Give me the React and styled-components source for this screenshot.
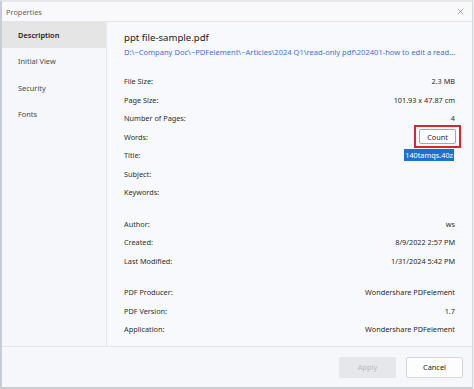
import React from 'react';
import styled, { createGlobalStyle } from 'styled-components';

const Global = createGlobalStyle`
  html, body { margin: 0; padding: 0; background: #eceef1; }
  body { font-family: "Noto Sans", "Open Sans", sans-serif; color: #333; }
`;

const groups = [
  [
    ['File Size:', '2.3 MB'],
    ['Page Size:', '101.93 x 47.87 cm'],
    ['Number of Pages:', '4'],
    ['Words:', 'count'],
    ['Title:', 'title'],
    ['Subject:', ''],
    ['Keywords:', ''],
  ],
  [
    ['Author:', 'ws'],
    ['Created:', '8/9/2022 2:57 PM'],
    ['Last Modified:', '1/31/2024 5:42 PM'],
  ],
  [
    ['PDF Producer:', 'Wondershare PDFelement'],
    ['PDF Version:', '1.7'],
    ['Application:', 'Wondershare PDFelement'],
  ],
];

const tabs = ['Description', 'Initial View', 'Security', 'Fonts'];

const renderValue = (v) => {
  if (v === 'count')
    return (
      <Highlight>
        <CountButton>Count</CountButton>
      </Highlight>
    );
  if (v === 'title') return <Selected>140tamqs.40z</Selected>;
  return <Value>{v}</Value>;
};

const App = () => (
  <>
    <Global />
    <Window>
      <TitleBar>
        <TitleText>Properties</TitleText>
        <Close viewBox="0 0 10 10">
          <path d="M1 1 L9 9 M9 1 L1 9" stroke="#777" strokeWidth="0.9" />
        </Close>
      </TitleBar>
      <Body>
        <Sidebar>
          {tabs.map((t, i) => (
            <Tab key={t} active={i === 0}>
              {t}
            </Tab>
          ))}
        </Sidebar>
        <Content>
          <FileName>ppt file-sample.pdf</FileName>
          <Path>
            D:\~Company Doc\~PDFelement\~Articles\2024 Q1\read-only pdf\202401-how to edit a read...
          </Path>
          {groups.map((g, gi) => (
            <Group key={gi} first={gi === 0}>
              {g.map(([label, value]) => (
                <Row key={label}>
                  <Label>{label}</Label>
                  {renderValue(value)}
                </Row>
              ))}
            </Group>
          ))}
        </Content>
      </Body>
      <Footer>
        <Button disabled>Apply</Button>
        <Button>Cancel</Button>
      </Footer>
    </Window>
  </>
);

export default App;

const Window = styled.div`
  width: 470px;
  height: 385px;
  display: flex;
  flex-direction: column;
  background: #f7f8fb;
  border-left: 2px solid #c8ccd3;
  border-bottom: 2px solid #c8ccd3;
  border-right: 1px solid #d6d9de;
  border-top: 2px solid #e4e6ea;
  box-sizing: content-box;
`;

const TitleBar = styled.div`
  height: 19px;
  display: flex;
  align-items: center;
  justify-content: space-between;
  padding: 0 8px 0 4px;
  background: #f9f9fb;
  border-bottom: 1px solid #e3e5e9;
`;

const TitleText = styled.span`
  font-size: 7.4px;
  color: #666;
`;

const Close = styled.svg`
  width: 7px;
  height: 7px;
`;

const Body = styled.div`
  flex: 1;
  display: flex;
  min-height: 0;
`;

const Sidebar = styled.div`
  width: 104px;
  flex-shrink: 0;
  background: #f5f7fa;
  border-right: 1px solid #e6e8ec;
  display: flex;
  flex-direction: column;
`;

const Tab = styled.div`
  height: 26.3px;
  display: flex;
  align-items: center;
  padding-left: 16px;
  font-size: 7.4px;
  color: ${({ active }) => (active ? '#222' : '#4a4a4a')};
  font-weight: ${({ active }) => (active ? 600 : 400)};
  background: ${({ active }) => (active ? '#e5e5e6' : 'transparent')};
`;

const Content = styled.div`
  flex: 1;
  min-width: 0;
  padding: 9px 17px 0 17px;
  background: #f8f9fc;
  display: flex;
  flex-direction: column;
`;

const FileName = styled.div`
  font-size: 9.6px;
  color: #222;
  line-height: 13px;
`;

const Path = styled.div`
  font-size: 7.55px;
  color: #3c72d6;
  line-height: 12px;
  white-space: nowrap;
  margin-top: 2px;
`;

const Group = styled.div`
  display: flex;
  flex-direction: column;
  margin-top: ${({ first }) => (first ? '14px' : '13px')};
`;

const Row = styled.div`
  height: 18.5px;
  display: flex;
  align-items: center;
  justify-content: space-between;
  font-size: 7.3px;
`;

const Label = styled.span`
  color: #2e2e2e;
`;

const Value = styled.span`
  color: #2a2a2a;
`;

const Highlight = styled.span`
  display: flex;
  align-items: center;
  justify-content: center;
  width: 43px;
  height: 19px;
  border: 2px solid #d8262c;
  margin-right: -6px;
`;

const CountButton = styled.button`
  width: 37px;
  height: 15px;
  padding: 0;
  font: inherit;
  font-size: 7.3px;
  color: #222;
  background: #fff;
  border: 1px solid #8fa9d6;
  border-radius: 2px;
`;

const Selected = styled.span`
  background: #1f6fd0;
  color: #fff;
  padding: 1px 1px;
  margin-right: 1px;
`;

const Footer = styled.div`
  height: 40px;
  flex-shrink: 0;
  display: flex;
  align-items: center;
  justify-content: flex-end;
  gap: 10px;
  padding: 0 9px 0 0;
  background: #f6f7fa;
  border-top: 1px solid #e3e5e9;
`;

const Button = styled.button`
  width: 57px;
  height: 21px;
  padding: 0;
  font: inherit;
  font-size: 7.4px;
  border-radius: 2px;
  color: ${({ disabled }) => (disabled ? '#b5b9c0' : '#222')};
  background: ${({ disabled }) => (disabled ? '#e5e7ea' : '#fdfdfd')};
  border: 1px solid ${({ disabled }) => (disabled ? '#e5e7ea' : '#d4d6da')};
`;
